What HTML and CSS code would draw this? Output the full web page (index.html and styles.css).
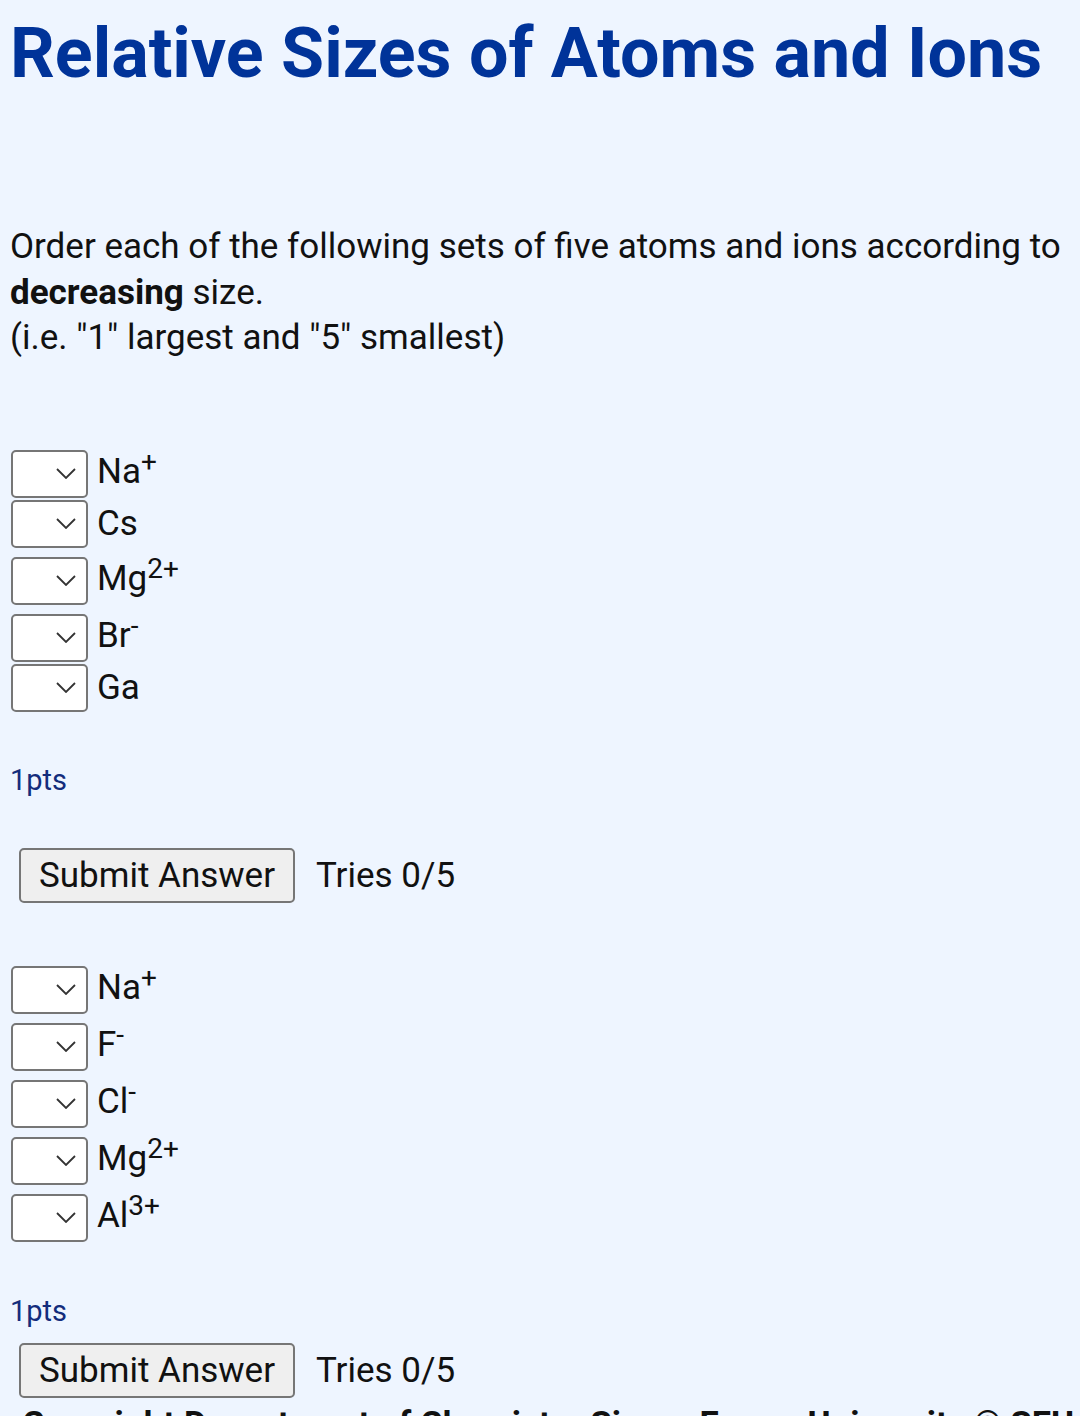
FILE: index.html
```html
<!DOCTYPE html>
<html>
<head>
<meta charset="utf-8">
<link rel="stylesheet" href="styles.css">
</head>
<body>
<h1 class="title">Relative Sizes of Atoms and Ions</h1>
<p class="intro">Order each of the following sets of five atoms and ions according to <b>decreasing</b> size.<br>(i.e. "1" largest and "5" smallest)</p>

<div class="set first">
  <div class="row has-sup"><span class="sel"><svg class="chev" viewBox="0 0 20 11" width="20" height="11"><path d="M1 1 L10 10 L19 1" fill="none" stroke="#333" stroke-width="1.8"/></svg></span><span class="label">Na<sup>+</sup></span></div>
  <div class="row"><span class="sel"><svg class="chev" viewBox="0 0 20 11" width="20" height="11"><path d="M1 1 L10 10 L19 1" fill="none" stroke="#333" stroke-width="1.8"/></svg></span><span class="label">Cs</span></div>
  <div class="row has-sup"><span class="sel"><svg class="chev" viewBox="0 0 20 11" width="20" height="11"><path d="M1 1 L10 10 L19 1" fill="none" stroke="#333" stroke-width="1.8"/></svg></span><span class="label">Mg<sup>2+</sup></span></div>
  <div class="row has-sup"><span class="sel"><svg class="chev" viewBox="0 0 20 11" width="20" height="11"><path d="M1 1 L10 10 L19 1" fill="none" stroke="#333" stroke-width="1.8"/></svg></span><span class="label">Br<sup>-</sup></span></div>
  <div class="row"><span class="sel"><svg class="chev" viewBox="0 0 20 11" width="20" height="11"><path d="M1 1 L10 10 L19 1" fill="none" stroke="#333" stroke-width="1.8"/></svg></span><span class="label">Ga</span></div>
</div>
<div class="pts">1pts</div>
<div class="submit"><button class="btn">Submit Answer</button><span class="tries">Tries 0/5</span></div>

<div class="set second">
  <div class="row has-sup"><span class="sel"><svg class="chev" viewBox="0 0 20 11" width="20" height="11"><path d="M1 1 L10 10 L19 1" fill="none" stroke="#333" stroke-width="1.8"/></svg></span><span class="label">Na<sup>+</sup></span></div>
  <div class="row has-sup"><span class="sel"><svg class="chev" viewBox="0 0 20 11" width="20" height="11"><path d="M1 1 L10 10 L19 1" fill="none" stroke="#333" stroke-width="1.8"/></svg></span><span class="label">F<sup>-</sup></span></div>
  <div class="row has-sup"><span class="sel"><svg class="chev" viewBox="0 0 20 11" width="20" height="11"><path d="M1 1 L10 10 L19 1" fill="none" stroke="#333" stroke-width="1.8"/></svg></span><span class="label">Cl<sup>-</sup></span></div>
  <div class="row has-sup"><span class="sel"><svg class="chev" viewBox="0 0 20 11" width="20" height="11"><path d="M1 1 L10 10 L19 1" fill="none" stroke="#333" stroke-width="1.8"/></svg></span><span class="label">Mg<sup>2+</sup></span></div>
  <div class="row has-sup"><span class="sel"><svg class="chev" viewBox="0 0 20 11" width="20" height="11"><path d="M1 1 L10 10 L19 1" fill="none" stroke="#333" stroke-width="1.8"/></svg></span><span class="label">Al<sup>3+</sup></span></div>
</div>
<div class="pts second-pts">1pts</div>
<div class="submit second-submit"><button class="btn">Submit Answer</button><span class="tries">Tries 0/5</span></div>
<div class="footer">Copyright Department of Chemistry Simon Fraser University © SFU</div>
</body>
</html>
```
FILE: styles.css
```css
html, body {
  margin: 0;
  padding: 0;
  background: #eef5ff;
}
body {
  padding: 0 10px;
  font-family: Roboto, "Noto Sans", sans-serif;
  font-size: 35px;
  color: #111;
  overflow: hidden;
  height: 1416px;
  box-sizing: border-box;
}
.title {
  font-size: 70px;
  font-weight: 700;
  color: #003399;
  margin: 0;
  padding-top: 10px;
  line-height: 86px;
  white-space: nowrap;
}
.intro {
  margin: 128px 0 0;
  line-height: 45.5px;
  font-size: 35px;
}
.set {
  margin-top: 82.5px;
}
.row {
  display: flex;
  align-items: flex-start;
  height: 50px;
  white-space: nowrap;
}
.row.has-sup {
  height: 57px;
  padding-top: 7px;
  box-sizing: border-box;
}
.row.has-sup .label {
  margin-top: -2px;
}
.label {
  margin-left: 9px;
  line-height: 47px;
}
.row sup {
  font-size: 28px;
  line-height: 0;
  vertical-align: 0.42em;
}
.sel {
  display: block;
  flex: none;
  box-sizing: border-box;
  width: 77px;
  height: 48px;
  border: 2px solid #767676;
  border-radius: 5px;
  background: #fff;
  position: relative;
  margin-left: 1px;
}
.chev {
  position: absolute;
  right: 10px;
  top: 16px;
}
.pts {
  color: #132c7c;
  font-size: 29px;
  margin-top: 46px;
  line-height: 40px;
}
.submit {
  display: flex;
  align-items: center;
  gap: 21px;
  margin-top: 48px;
  padding-left: 9px;
}
.btn {
  font-family: Roboto, "Noto Sans", sans-serif;
  font-size: 35px;
  color: #111;
  background: #efefef;
  border: 2px solid #767676;
  border-radius: 5px;
  height: 55px;
  padding: 0 18px;
}
.second {
  margin-top: 56px;
}
.second-pts {
  margin-top: 47px;
}
.second-submit {
  margin-top: 12px;
}
.footer {
  margin-top: 7px;
  padding-left: 12px;
  font-size: 35px;
  line-height: 40px;
  font-weight: 700;
  white-space: nowrap;
}
```
